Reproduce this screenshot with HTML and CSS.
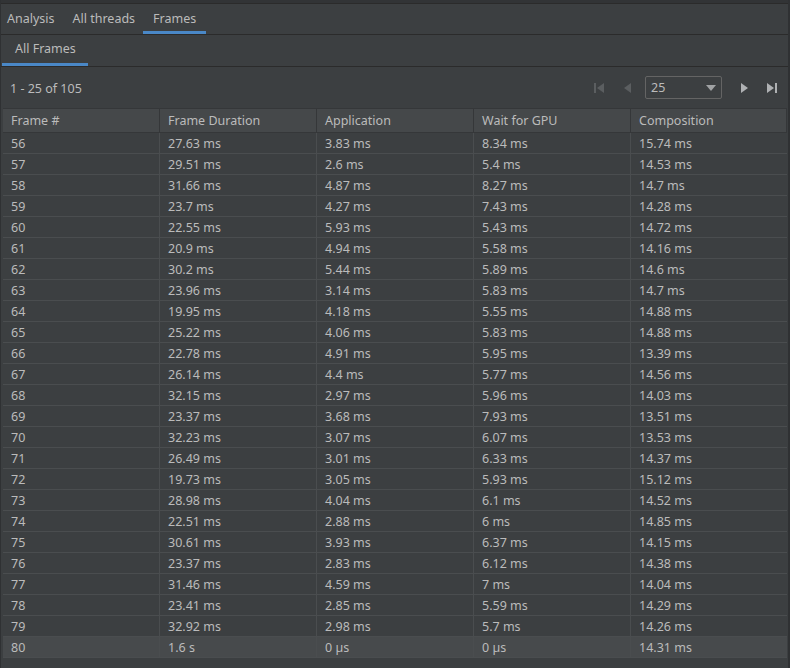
FILE: index.html
```html
<!DOCTYPE html>
<html>
<head>
<meta charset="utf-8">
<link rel="stylesheet" href="styles.css">
</head>
<body>
<div class="app">
  <div class="topstrip"></div>
  <div class="tabs">
    <div class="tab">Analysis</div>
    <div class="tab">All threads</div>
    <div class="tab active">Frames</div>
  </div>
  <div class="subtabs">
    <div class="subtab active">All Frames</div>
  </div>
  <div class="pager">
    <div class="count">1 - 25 of 105</div>
    <div class="nav">
      <svg class="ico dis" width="14" height="14" viewBox="0 0 14 14"><rect x="2" y="2" width="2" height="10" fill="currentColor"/><polygon points="12,2 12,12 5,7" fill="currentColor"/></svg>
      <svg class="ico dis" width="14" height="14" viewBox="0 0 14 14"><polygon points="10,2 10,12 3,7" fill="currentColor"/></svg>
      <div class="combo"><span>25</span><svg width="10" height="6" viewBox="0 0 10 6"><polygon points="0,0 10,0 5,6" fill="currentColor"/></svg></div>
      <svg class="ico en" width="14" height="14" viewBox="0 0 14 14"><polygon points="4,2 4,12 11,7" fill="currentColor"/></svg>
      <svg class="ico en" width="14" height="14" viewBox="0 0 14 14"><polygon points="2,2 2,12 9,7" fill="currentColor"/><rect x="10" y="2" width="2" height="10" fill="currentColor"/></svg>
    </div>
  </div>
  <div class="table">
    <div class="row head"><div>Frame #</div><div>Frame Duration</div><div>Application</div><div>Wait for GPU</div><div>Composition</div></div>
    <div class="row"><div>56</div><div>27.63 ms</div><div>3.83 ms</div><div>8.34 ms</div><div>15.74 ms</div></div>
    <div class="row"><div>57</div><div>29.51 ms</div><div>2.6 ms</div><div>5.4 ms</div><div>14.53 ms</div></div>
    <div class="row"><div>58</div><div>31.66 ms</div><div>4.87 ms</div><div>8.27 ms</div><div>14.7 ms</div></div>
    <div class="row"><div>59</div><div>23.7 ms</div><div>4.27 ms</div><div>7.43 ms</div><div>14.28 ms</div></div>
    <div class="row"><div>60</div><div>22.55 ms</div><div>5.93 ms</div><div>5.43 ms</div><div>14.72 ms</div></div>
    <div class="row"><div>61</div><div>20.9 ms</div><div>4.94 ms</div><div>5.58 ms</div><div>14.16 ms</div></div>
    <div class="row"><div>62</div><div>30.2 ms</div><div>5.44 ms</div><div>5.89 ms</div><div>14.6 ms</div></div>
    <div class="row"><div>63</div><div>23.96 ms</div><div>3.14 ms</div><div>5.83 ms</div><div>14.7 ms</div></div>
    <div class="row"><div>64</div><div>19.95 ms</div><div>4.18 ms</div><div>5.55 ms</div><div>14.88 ms</div></div>
    <div class="row"><div>65</div><div>25.22 ms</div><div>4.06 ms</div><div>5.83 ms</div><div>14.88 ms</div></div>
    <div class="row"><div>66</div><div>22.78 ms</div><div>4.91 ms</div><div>5.95 ms</div><div>13.39 ms</div></div>
    <div class="row"><div>67</div><div>26.14 ms</div><div>4.4 ms</div><div>5.77 ms</div><div>14.56 ms</div></div>
    <div class="row"><div>68</div><div>32.15 ms</div><div>2.97 ms</div><div>5.96 ms</div><div>14.03 ms</div></div>
    <div class="row"><div>69</div><div>23.37 ms</div><div>3.68 ms</div><div>7.93 ms</div><div>13.51 ms</div></div>
    <div class="row"><div>70</div><div>32.23 ms</div><div>3.07 ms</div><div>6.07 ms</div><div>13.53 ms</div></div>
    <div class="row"><div>71</div><div>26.49 ms</div><div>3.01 ms</div><div>6.33 ms</div><div>14.37 ms</div></div>
    <div class="row"><div>72</div><div>19.73 ms</div><div>3.05 ms</div><div>5.93 ms</div><div>15.12 ms</div></div>
    <div class="row"><div>73</div><div>28.98 ms</div><div>4.04 ms</div><div>6.1 ms</div><div>14.52 ms</div></div>
    <div class="row"><div>74</div><div>22.51 ms</div><div>2.88 ms</div><div>6 ms</div><div>14.85 ms</div></div>
    <div class="row"><div>75</div><div>30.61 ms</div><div>3.93 ms</div><div>6.37 ms</div><div>14.15 ms</div></div>
    <div class="row"><div>76</div><div>23.37 ms</div><div>2.83 ms</div><div>6.12 ms</div><div>14.38 ms</div></div>
    <div class="row"><div>77</div><div>31.46 ms</div><div>4.59 ms</div><div>7 ms</div><div>14.04 ms</div></div>
    <div class="row"><div>78</div><div>23.41 ms</div><div>2.85 ms</div><div>5.59 ms</div><div>14.29 ms</div></div>
    <div class="row"><div>79</div><div>32.92 ms</div><div>2.98 ms</div><div>5.7 ms</div><div>14.26 ms</div></div>
    <div class="row sel"><div>80</div><div>1.6 s</div><div>0 µs</div><div>0 µs</div><div>14.31 ms</div></div>
  </div>
</div>
</body>
</html>
```

FILE: styles.css
```css
html, body {
  margin: 0;
  padding: 0;
  background: #3c3f41;
}
body {
  font-family: "Noto Sans", "Open Sans", sans-serif;
  font-size: 12.5px;
  color: #bbbbbb;
  width: 790px;
  height: 668px;
  overflow: hidden;
}
.app {
  height: 668px;
  width: 790px;
  border-left: 1px solid #2f3133;
  border-right: 2px solid #2f3133;
  box-sizing: border-box;
}
.topstrip {
  height: 3px;
  background: #323436;
  border-bottom: 1px solid #2b2b2b;
}
.tabs {
  display: flex;
  height: 31px;
  border-bottom: 1px solid #2b2b2b;
  box-sizing: border-box;
}
.tab {
  padding: 3px 6px 0 6px;
  line-height: 24px;
  height: 30px;
  box-sizing: border-box;
  border-bottom: 3px solid transparent;
  margin-right: 6px;
  white-space: nowrap;
}
.tab:nth-child(2) { margin-right: 0; padding-right: 8px; }
.tab.active {
  border-bottom-color: #4a88c7;
  padding: 3px 10px 0 10px;
}
.subtabs {
  display: flex;
  height: 32px;
  border-bottom: 1px solid #2b2b2b;
  box-sizing: border-box;
  padding-left: 1px;
}
.subtab {
  padding: 0 0 0 13px;
  line-height: 28px;
  height: 31px;
  width: 86px;
  box-sizing: border-box;
  border-bottom: 3px solid #4a88c7;
  white-space: nowrap;
}
.pager {
  height: 41px;
  display: flex;
  align-items: center;
  justify-content: space-between;
  padding: 0 9px 0 9px;
  box-sizing: border-box;
}
.count { padding-top: 1px; white-space: nowrap; }
.nav {
  display: flex;
  align-items: center;
}
.ico { display: block; }
.ico.dis { color: #5b5e60; }
.ico.en { color: #afb1b3; }
.nav .ico:nth-child(1) { margin-right: 15px; }
.nav .ico:nth-child(2) { margin-right: 10px; }
.nav .ico:nth-child(4) { margin-left: 15px; margin-right: 14px; }
.combo {
  width: 77px;
  height: 23px;
  border: 1px solid #646464;
  border-radius: 2px;
  box-sizing: border-box;
  display: flex;
  align-items: center;
  justify-content: space-between;
  padding: 0 5px 0 5px;
  color: #bbbbbb;
}
.combo svg { color: #a0a2a4; }
.table {
  margin-left: 2px;
  width: 784px;
}
.row {
  display: grid;
  grid-template-columns: 157px 157px 157px 157px 156px;
  height: 21px;
  border-bottom: 1px solid #4a4d4f;
  box-sizing: border-box;
}
.row > div {
  padding: 1px 0 0 8px;
  line-height: 20px;
  height: 20px;
  box-sizing: border-box;
  border-right: 1px solid #4a4d4f;
  white-space: nowrap;
}
.row > div:last-child { border-right: none; }
.row.head {
  height: 25px;
  background: #45484a;
  border-bottom: 1px solid #353739;
  border-top: 1px solid #353739;
}
.row.head > div {
  padding-top: 0;
  height: 23px;
  line-height: 23px;
  border-right: 1px solid #353739;
}
.row.sel {
  background: #474a4c;
}
```
